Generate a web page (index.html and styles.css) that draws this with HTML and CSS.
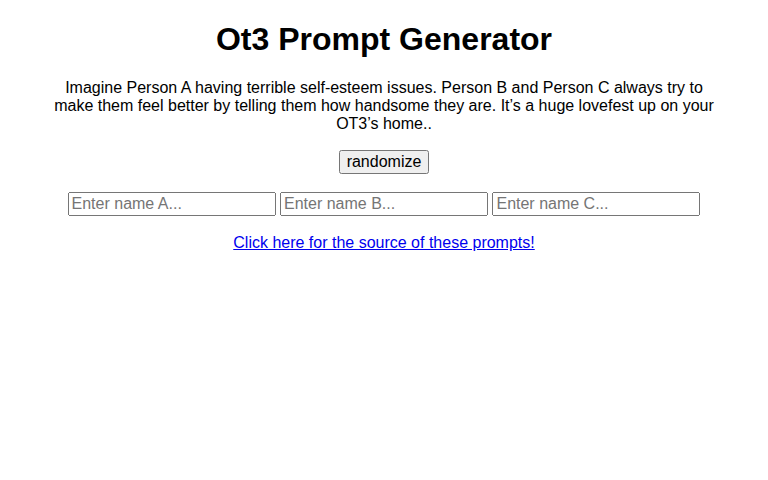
FILE: index.html
```html
<!DOCTYPE html>
<html>
<head>
    <meta charset="UTF-8">
    <meta name="viewport" content="width=device-width, initial-scale=1.0">
    <title>Ot3 Prompt Generator</title>
    <link rel="stylesheet" href="styles.css">
</head>
<body>
    <h1>Ot3 Prompt Generator</h1>
    <p id="prompt" class="prompt">Imagine Person A having terrible self-esteem issues. Person B and Person C always try to make them feel better by telling them how handsome they are. It’s a huge lovefest up on your OT3’s home..</p>
    <p class="controls"><button onclick="randomize()">randomize</button></p>
    <p class="names">
        <input type="text" id="nameA" placeholder="Enter name A...">
        <input type="text" id="nameB" placeholder="Enter name B...">
        <input type="text" id="nameC" placeholder="Enter name C...">
    </p>
    <p class="source"><a href="#">Click here for the source of these prompts!</a></p>

    <script>
        const prompts = [
            "Imagine Person A having terrible self-esteem issues. Person B and Person C always try to make them feel better by telling them how handsome they are. It’s a huge lovefest up on your OT3’s home..",
            "Imagine Person A, Person B and Person C building a blanket fort on a rainy afternoon and refusing to leave it until dinner.",
            "Imagine Person B teaching Person A and Person C how to bake, and all three of them ending up covered in flour."
        ];

        function randomize() {
            const a = document.getElementById("nameA").value || "Person A";
            const b = document.getElementById("nameB").value || "Person B";
            const c = document.getElementById("nameC").value || "Person C";
            const text = prompts[Math.floor(Math.random() * prompts.length)];
            document.getElementById("prompt").innerHTML = text
                .replace(/Person A/g, a)
                .replace(/Person B/g, b)
                .replace(/Person C/g, c);
        }
    </script>
</body>
</html>
```

FILE: styles.css
```css
body {
    font-family: "Liberation Sans", Arial, sans-serif;
    text-align: center;
    color: black;
    margin: 0 8px;
}
h1 {
    margin-top: 21px;
    margin-bottom: 21px;
}
.prompt {
    max-width: 670px;
    margin: 16px auto 17px;
}
.controls {
    margin-bottom: 18px;
}
.source {
    margin-top: 18px;
}
button {
    font-family: "Liberation Sans", Arial, sans-serif;
    font-size: 16px;
}
input {
    font-family: "Liberation Sans", Arial, sans-serif;
    font-size: 16px;
    width: 200px;
}
```
